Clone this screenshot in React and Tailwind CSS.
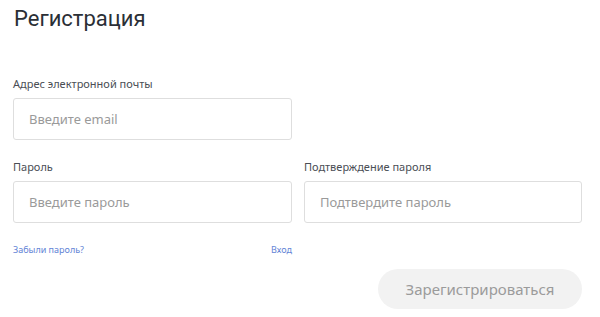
import React from 'react';

const Field = ({ label, placeholder, type = 'text' }) => (
  <label className="flex flex-col">
    <span className="text-[11px] leading-[14px] text-[#4a4e55] mb-[7px]">{label}</span>
    <input
      type={type}
      placeholder={placeholder}
      className="h-[42px] w-full rounded-[3px] border border-[#dedede] bg-white px-[15px] text-[13px] text-[#333] placeholder:text-[#9a9a9a] outline-none"
    />
  </label>
);

export default function App() {
  return (
    <div
      className="min-h-[317px] w-[600px] bg-white pl-[13px] pr-[18px]"
      style={{ fontFamily: '"Noto Sans", "Open Sans", sans-serif' }}
    >
      <h1
        className="pt-[3px] pl-px text-[22px] leading-[32px] font-normal text-[#2b2f36]"
        style={{ fontFamily: 'Roboto, "Noto Sans", sans-serif' }}
      >
        Регистрация
      </h1>

      <div className="mt-[42px] w-[279px]">
        <Field label="Адрес электронной почты" placeholder="Введите email" type="email" />
      </div>

      <div className="mt-[20px] grid grid-cols-[279px_278px] gap-x-[12px]">
        <Field label="Пароль" placeholder="Введите пароль" type="password" />
        <Field label="Подтверждение пароля" placeholder="Подтвердите пароль" type="password" />
      </div>

      <div className="mt-[21px] flex w-[279px] justify-between text-[9px] leading-[12px] text-[#6384d6]">
        <a href="#">Забыли пароль?</a>
        <a href="#">Вход</a>
      </div>

      <div className="mt-[13px] flex justify-end">
        <button className="h-[40px] w-[204px] rounded-full bg-[#f2f2f2] text-[15px] text-[#9b9b9b]">
          Зарегистрироваться
        </button>
      </div>
    </div>
  );
}
